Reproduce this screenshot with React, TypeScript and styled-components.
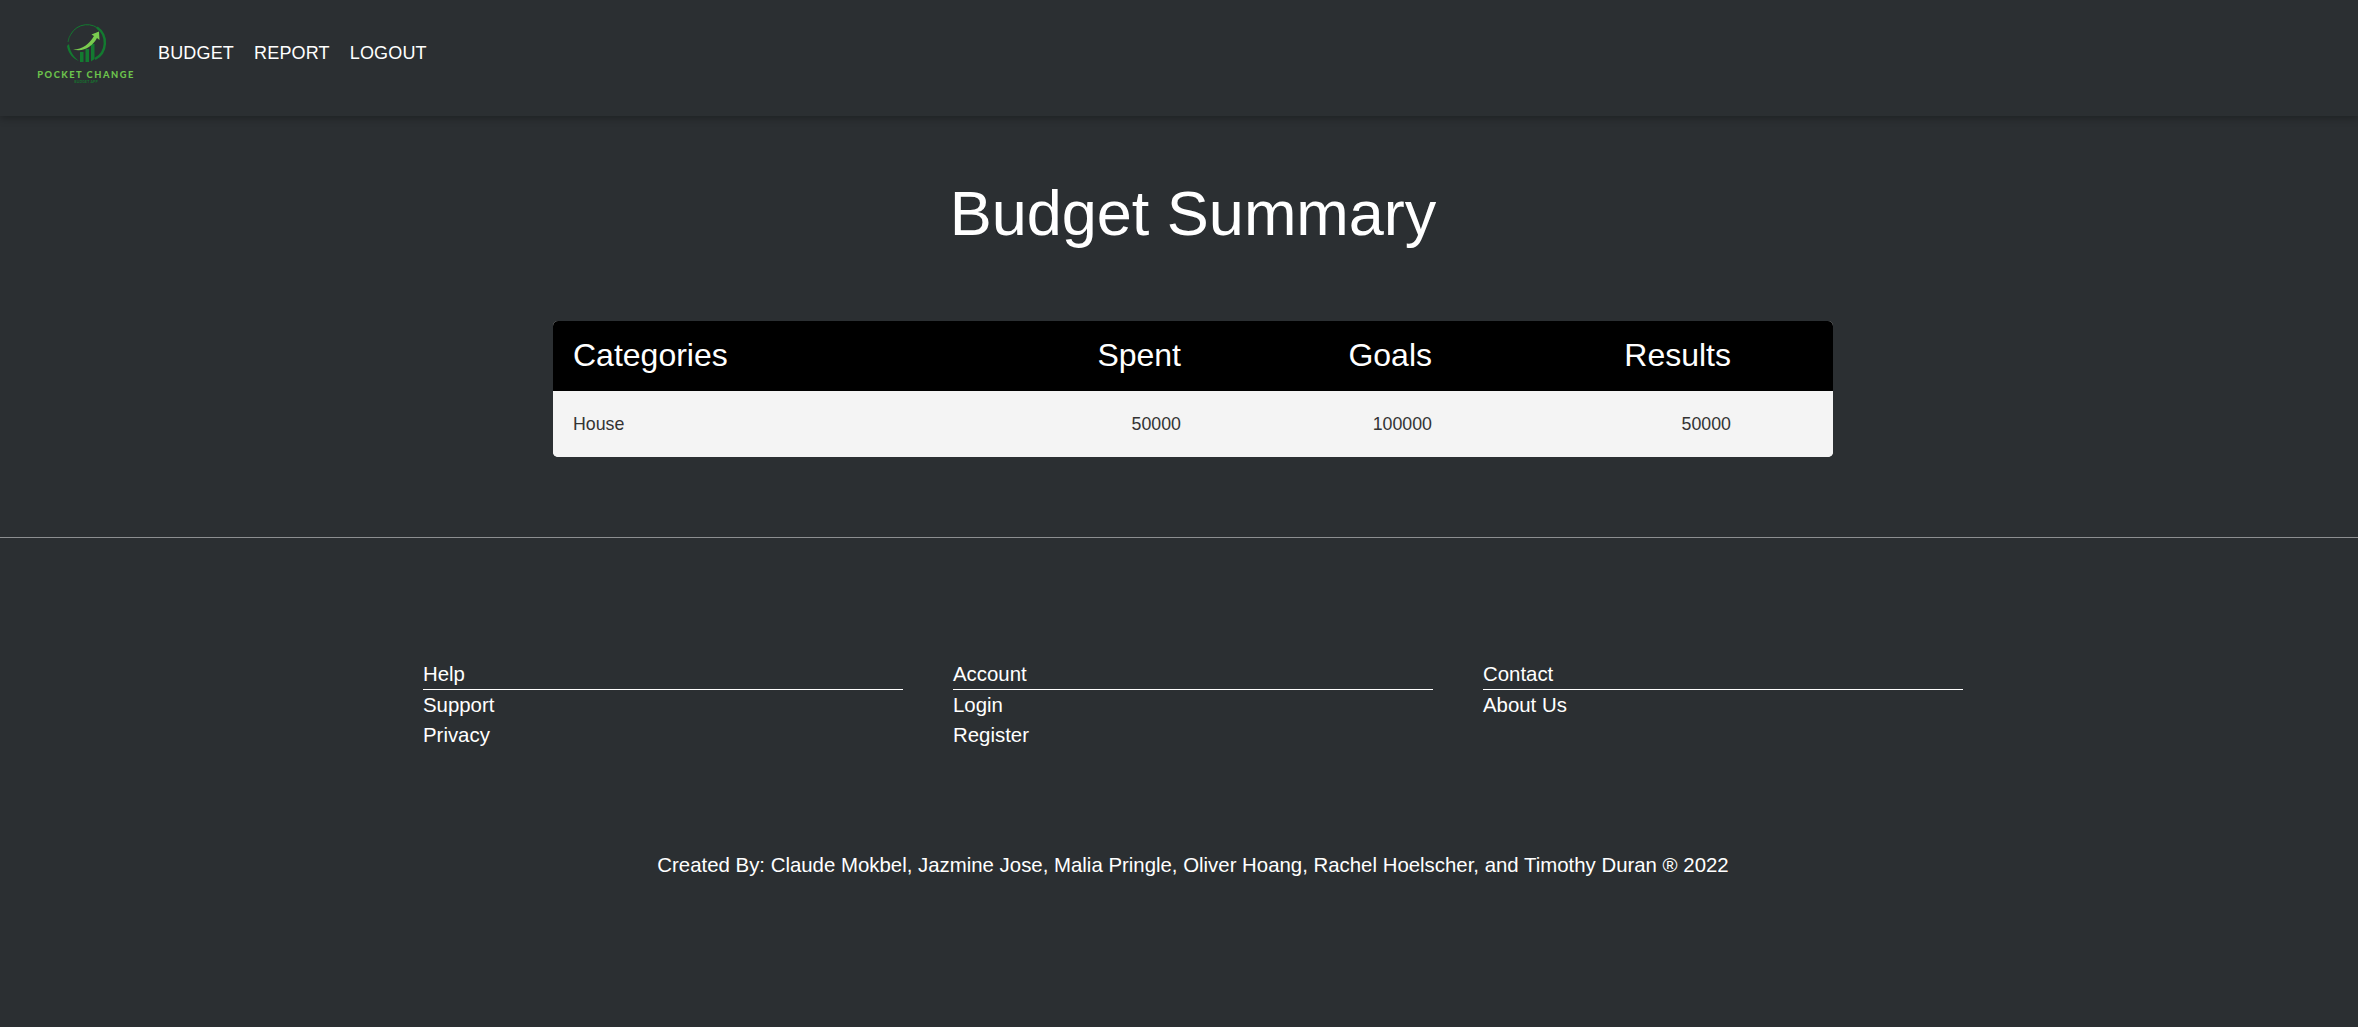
import React from "react";
import styled, { createGlobalStyle } from "styled-components";

const Global = createGlobalStyle`
  html, body { margin: 0; padding: 0; background: #2b2f32; overflow: hidden; }
  body { font-family: "Liberation Sans", Arial, sans-serif; color: #fff; min-height: 1027px; }
  a { color: inherit; text-decoration: none; }
`;

const Nav = styled.nav`
  height: 116px;
  display: flex;
  align-items: flex-start;
  padding-left: 38px;
  background: #2b2f32;
  box-shadow: 0 2px 8px rgba(0, 0, 0, 0.3);
`;
const LogoBox = styled.div`
  width: 96px;
  margin-top: 22px;
  display: flex;
  flex-direction: column;
  align-items: center;
`;
const LogoName = styled.div`
  font-family: Lato, "Open Sans", sans-serif;
  font-weight: 900;
  font-size: 9.3px;
  line-height: 11px;
  letter-spacing: 1.5px;
  white-space: nowrap;
  color: #6cc24c;
  margin-top: 5px;
`;
const LogoSub = styled.div`
  font-family: Lato, "Open Sans", sans-serif;
  font-weight: 700;
  font-size: 3.5px;
  line-height: 5px;
  letter-spacing: 0.2px;
  white-space: nowrap;
  color: #16752f;
`;
const NavLinks = styled.div`
  display: flex;
  gap: 20px;
  margin: 42px 0 0 24px;
  font-size: 18px;
  line-height: 21px;
  letter-spacing: 0.17px;
  padding-top: 1px;
`;
const Content = styled.main`
  padding-left: 28px;
  display: flex;
  flex-direction: column;
  align-items: center;
`;
const Title = styled.h1`
  margin: 60px 0 0;
  font-size: 63px;
  font-weight: 400;
  line-height: 74px;
`;
const Table = styled.div`
  width: 1280px;
  margin-top: 71px;
  border-radius: 5px;
  overflow: hidden;
  background: #f4f4f4;
  color: #333;
`;
const Row = styled.div<{ $head?: boolean }>`
  box-sizing: border-box;
  display: grid;
  grid-template-columns: 328px 280px 251px 299px;
  padding: 0 102px ${(p) => (p.$head ? "2px" : "0")} 20px;
  align-items: center;
  height: ${(p) => (p.$head ? "70px" : "66px")};
  font-size: ${(p) => (p.$head ? "32px" : "17.8px")};
  background: ${(p) => (p.$head ? "#000" : "#f4f4f4")};
  color: ${(p) => (p.$head ? "#fff" : "#333")};
`;
const Cell = styled.div<{ $left?: boolean }>`
  text-align: ${(p) => (p.$left ? "left" : "right")};
`;
const Rule = styled.hr`
  margin: 80px 0 0;
  border: 0;
  height: 1px;
  background: #8d8f91;
`;
const Columns = styled.div`
  display: flex;
  gap: 50px;
  margin-top: 125px;
`;
const Column = styled.div`
  width: 480px;
  font-size: 20.4px;
  line-height: 30px;
`;
const ColumnHead = styled.div`
  line-height: 23px;
  padding-bottom: 3px;
  border-bottom: 1px solid #fff;
`;
const ColumnLink = styled.a`
  display: block;
`;
const Credit = styled.p`
  margin: 104px 0 0;
  font-size: 20.4px;
  line-height: 23px;
`;

const Logo = () => (
  <svg width="42" height="42" viewBox="0 0 42 42" aria-hidden="true">
    <path d="M6 12 A18.5 18.5 0 0 1 36 9" fill="none" stroke="#137a30" strokeWidth="1" />
    <path d="M32 5.5 A18.5 18.5 0 0 1 30 37" fill="none" stroke="#137a30" strokeWidth="2.4" />
    <path d="M2 24 C3 31 8 37 14 39 C9 35 5 30 4 22Z" fill="#137a30" />
    <path d="M3 20 A18 18 0 0 1 6 12" fill="none" stroke="#137a30" strokeWidth="0.8" />
    <path d="M15 30h3.5v10h-3.5zM20.5 27h3.5v13h-3.5zM26 22h3.5v15l-3.5 2.5z" fill="#137a30" />
    <path d="M8 27.5 C18 27.5 24 22 29 14 L26.5 12.5 L34 9.5 L34.5 18 L32 16 C27 25 19 30 8 27.5Z" fill="#7acb4f" />
  </svg>
);

const footer = [
  { head: "Help", links: ["Support", "Privacy"] },
  { head: "Account", links: ["Login", "Register"] },
  { head: "Contact", links: ["About Us"] },
];

export default function App() {
  return (
    <>
      <Global />
      <Nav>
        <LogoBox>
          <Logo />
          <LogoName>POCKET CHANGE</LogoName>
          <LogoSub>BUDGET APP</LogoSub>
        </LogoBox>
        <NavLinks>
          <a href="#budget">BUDGET</a>
          <a href="#report">REPORT</a>
          <a href="#logout">LOGOUT</a>
        </NavLinks>
      </Nav>
      <Content>
        <Title>Budget Summary</Title>
        <Table>
          <Row $head>
            <Cell $left>Categories</Cell>
            <Cell>Spent</Cell>
            <Cell>Goals</Cell>
            <Cell>Results</Cell>
          </Row>
          <Row>
            <Cell $left>House</Cell>
            <Cell>50000</Cell>
            <Cell>100000</Cell>
            <Cell>50000</Cell>
          </Row>
        </Table>
      </Content>
      <Rule />
      <Content>
        <Columns>
          {footer.map((c) => (
            <Column key={c.head}>
              <ColumnHead>{c.head}</ColumnHead>
              {c.links.map((l) => (
                <ColumnLink key={l} href="#">{l}</ColumnLink>
              ))}
            </Column>
          ))}
        </Columns>
        <Credit>Created By: Claude Mokbel, Jazmine Jose, Malia Pringle, Oliver Hoang, Rachel Hoelscher, and Timothy Duran ® 2022</Credit>
      </Content>
    </>
  );
}
